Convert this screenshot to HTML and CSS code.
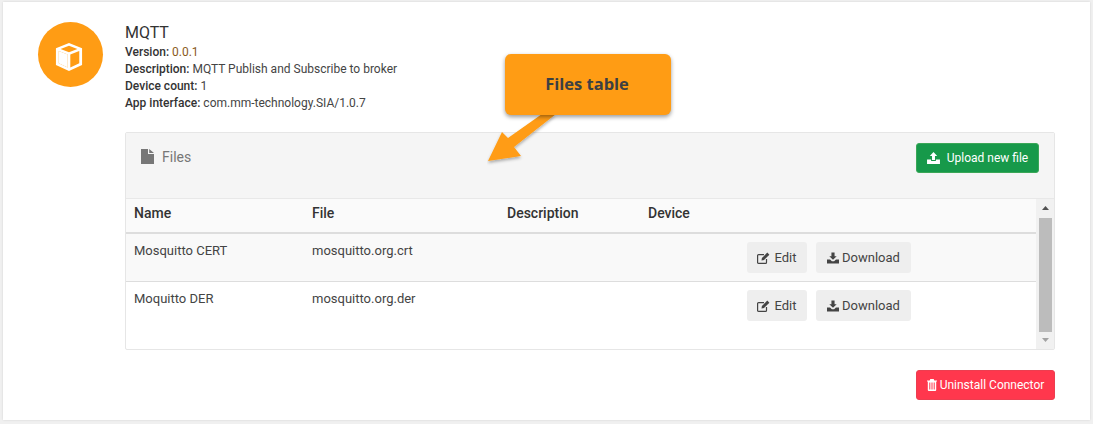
FILE: index.html
```html
<!DOCTYPE html>
<html lang="en">
<head>
<meta charset="utf-8">
<title>MQTT connector</title>
<link rel="stylesheet" href="styles.css">
</head>
<body>
<main class="card">
  <div class="app-icon">
    <svg class="cube" width="28" height="30" viewBox="0 0 30 32"><path fill="#fff" fill-rule="evenodd" d="M15 1 29 6.500V24.500L15 31 1 24.500V6.500ZM15 4 6 7.300 15 10.800 24 7.300ZM4 9.700V22.800L13.600 27.300V13.400ZM16.400 13.400V27.300L26 22.800V9.700Z"/><path fill="#fff" d="M4 9.700 13.600 13.400V27.300L4 22.800Z"/></svg>
  </div>
  <div class="content">
    <h1 class="title">MQTT</h1>
    <p class="meta"><b>Version:</b> <span class="version">0.0.1</span></p>
    <p class="meta"><b>Description:</b> MQTT Publish and Subscribe to broker</p>
    <p class="meta"><b>Device count:</b> 1</p>
    <p class="meta"><b>App interface:</b> com.mm-technology.SIA/1.0.7</p>

    <section class="panel">
      <header class="panel-head">
        <div class="panel-title">
          <svg width="13" height="15" viewBox="0 0 13 15"><path fill="#777" d="M0 0H7V5H13V15H0ZM8.200 0 13 4H8.200Z"/></svg>
          <span>Files</span>
        </div>
        <button class="btn btn-green">
          <svg width="13" height="12" viewBox="0 0 14 13"><path fill="#fff" d="M7 0 11 4.200H8.600V8.600H5.400V4.200H3ZM0 8H4.400V9.800H9.600V8H14V13H0Z"/></svg>
          Upload new file
        </button>
      </header>
      <div class="table-wrap">
        <div class="table">
          <div class="row row-head">
            <div class="c-name">Name</div><div class="c-file">File</div><div class="c-desc">Description</div><div class="c-dev">Device</div>
          </div>
          <div class="row row-odd">
            <div class="c-name">Mosquitto CERT</div><div class="c-file">mosquitto.org.crt</div><div class="c-desc"></div><div class="c-dev"></div>
            <div class="actions">
              <button class="btn btn-light btn-edit"><svg width="13" height="12" viewBox="0 0 13 12"><path fill="none" stroke="#444" stroke-width="1.200" d="M9.500 7V10.400Q9.500 11.400 8.500 11.400H1.600Q.6 11.400 .6 10.400V3.600Q.6 2.600 1.600 2.600H7"/><path fill="#444" d="M10.300 .6 12.400 2.700 7 8.100 4.500 8.500 4.900 6Z"/></svg>Edit</button>
              <button class="btn btn-light btn-down"><svg width="12" height="12" viewBox="0 0 13 12"><path fill="#444" d="M4.800 0H8.200V4H10.500L6.500 8 2.500 4H4.800ZM0 7.500H3.300L5.300 9.400H7.700L9.700 7.500H13V12H0Z"/></svg>Download</button>
            </div>
          </div>
          <div class="row row-even">
            <div class="c-name">Moquitto DER</div><div class="c-file">mosquitto.org.der</div><div class="c-desc"></div><div class="c-dev"></div>
            <div class="actions">
              <button class="btn btn-light btn-edit"><svg width="13" height="12" viewBox="0 0 13 12"><path fill="none" stroke="#444" stroke-width="1.200" d="M9.500 7V10.400Q9.500 11.400 8.500 11.400H1.600Q.6 11.400 .6 10.400V3.600Q.6 2.600 1.600 2.600H7"/><path fill="#444" d="M10.300 .6 12.400 2.700 7 8.100 4.500 8.500 4.900 6Z"/></svg>Edit</button>
              <button class="btn btn-light btn-down"><svg width="12" height="12" viewBox="0 0 13 12"><path fill="#444" d="M4.800 0H8.200V4H10.500L6.500 8 2.500 4H4.800ZM0 7.500H3.300L5.300 9.400H7.700L9.700 7.500H13V12H0Z"/></svg>Download</button>
            </div>
          </div>
        </div>
        <div class="scrollbar">
          <svg class="arrow" width="7" height="4" viewBox="0 0 7 4"><path fill="#505050" d="M3.500 0 7 4H0Z"/></svg>
          <div class="thumb"></div>
          <svg class="arrow" width="7" height="4" viewBox="0 0 7 4"><path fill="#a3a3a3" d="M0 0H7L3.500 4Z"/></svg>
        </div>
      </div>
    </section>
    <div class="footer">
      <button class="btn btn-red">
        <svg width="10" height="12" viewBox="0 0 10 12"><path fill="#fff" fill-rule="evenodd" d="M3.300 0H6.700L7.300 1.500H10V2.500H9.200V11Q9.200 12 8.200 12H1.800Q.8 12 .8 11V2.500H0V1.500H2.700ZM2.300 3.500V10.500H3.300V3.500ZM4.500 3.500V10.500H5.500V3.500ZM6.700 3.500V10.500H7.700V3.500Z"/></svg>
        Uninstall Connector
      </button>
    </div>
  </div>
  <svg class="callout-arrow" width="80" height="64" viewBox="0 0 80 64"><defs><filter id="s" x="-20%" y="-20%" width="140%" height="140%"><feDropShadow dx="0" dy="2" stdDeviation="1.500" flood-color="#000" flood-opacity=".3"/></filter></defs><path fill="#ff9c14" filter="url(#s)" d="M55 0H69L27 33 34 42 1 47 15 18 21 24Z"/></svg>
  <aside class="callout">Files table</aside>
</main>
</body>
</html>
```

FILE: styles.css
```css
* { box-sizing: border-box; }
html, body { height: 100%; }
body {
  margin: 0;
  padding: 2px 3px 4px;
  background: #f0f0f0;
  font-family: Roboto, "Liberation Sans", sans-serif;
  color: #333;
}
.card {
  position: relative;
  display: flex;
  height: 418px;
  padding: 20px 35px 0;
  background: #fff;
  box-shadow: 0 0 2px rgba(0, 0, 0, .12);
}
.app-icon {
  flex: none;
  display: flex;
  align-items: center;
  justify-content: center;
  width: 65px;
  height: 65px;
  border-radius: 50%;
  background: #ff9c14;
}
.cube { margin: 4px 3px 0 0; }
.content { flex: 1; min-width: 0; margin-left: 22px; }
.title { margin: 0 0 1px; font-size: 16px; font-weight: 400; line-height: 21px; }
.meta { margin: 0; font-size: 12px; line-height: 17px; color: #444; }
.meta b { font-weight: 500; color: #333; }
.version { color: #8a5a1c; }
.panel { margin-top: 20px; border: 1px solid #e6e6e6; border-radius: 2px; }
.panel-head {
  display: flex;
  justify-content: space-between;
  align-items: flex-start;
  height: 66px;
  padding: 10px 15px;
  background: #f5f5f5;
  border-bottom: 1px solid #e8e8e8;
}
.panel-title { display: flex; align-items: center; gap: 8px; height: 27px; font-size: 14px; color: #777; }
.table-wrap { display: flex; height: 150px; }
.table { flex: 1; min-width: 0; }
.row { display: flex; font-size: 13px; color: #444; }
.row-head { height: 35px; padding-top: 6px; background: #fafafa; border-bottom: 2px solid #ddd; font-size: 14px; font-weight: 500; line-height: 16px; color: #333; }
.row-odd { height: 48px; background: #f9f9f9; border-bottom: 1px solid #ddd; }
.row-even { height: 48px; background: #fff; }
.c-name { width: 186px; padding-left: 8px; }
.c-file { width: 195px; }
.c-desc { width: 141px; }
.c-dev { width: 99px; }
.row-odd .c-name, .row-odd .c-file, .row-even .c-name, .row-even .c-file { padding-top: 9px; line-height: 15px; }
.actions { display: flex; gap: 9px; padding-top: 8px; }
.btn {
  display: inline-flex;
  align-items: center;
  justify-content: center;
  border: 0;
  border-radius: 3px;
  font-family: inherit;
  font-size: 12px;
  cursor: pointer;
}
.btn-green { width: 123px; height: 30px; gap: 7px; background: #17994a; color: #fff; border: 1px solid #3aa757; }
.btn-light { height: 31px; gap: 3px; background: #eee; color: #444; font-size: 13px; }
.btn-edit { width: 60px; gap: 4px; }
.btn-down { width: 95px; }
.btn-red { width: 139px; height: 30px; gap: 3px; background: #ff374d; color: #fff; border: 1px solid #ec3e50; }
.scrollbar {
  flex: none;
  display: flex;
  flex-direction: column;
  align-items: center;
  justify-content: space-between;
  width: 18px;
  padding: 7px 0 7px;
  background: #f1f1f1;
}
.thumb { width: 13px; height: 114px; margin-top: 1px; background: #bcbcbc; }
.arrow { flex: none; }
.footer { display: flex; justify-content: flex-end; margin-top: 20px; }
.callout {
  position: absolute;
  left: 502px;
  top: 52px;
  display: flex;
  align-items: center;
  justify-content: center;
  width: 166px;
  height: 61px;
  padding: 0 2px 2px 0;
  border-radius: 6px;
  background: #ff9c14;
  box-shadow: 0 2px 4px rgba(0, 0, 0, .4);
  font-family: "Open Sans", sans-serif;
  font-size: 16.500px;
  font-weight: 700;
  color: #3c4043;
}
.callout-arrow { position: absolute; left: 484px; top: 112px; }
```
